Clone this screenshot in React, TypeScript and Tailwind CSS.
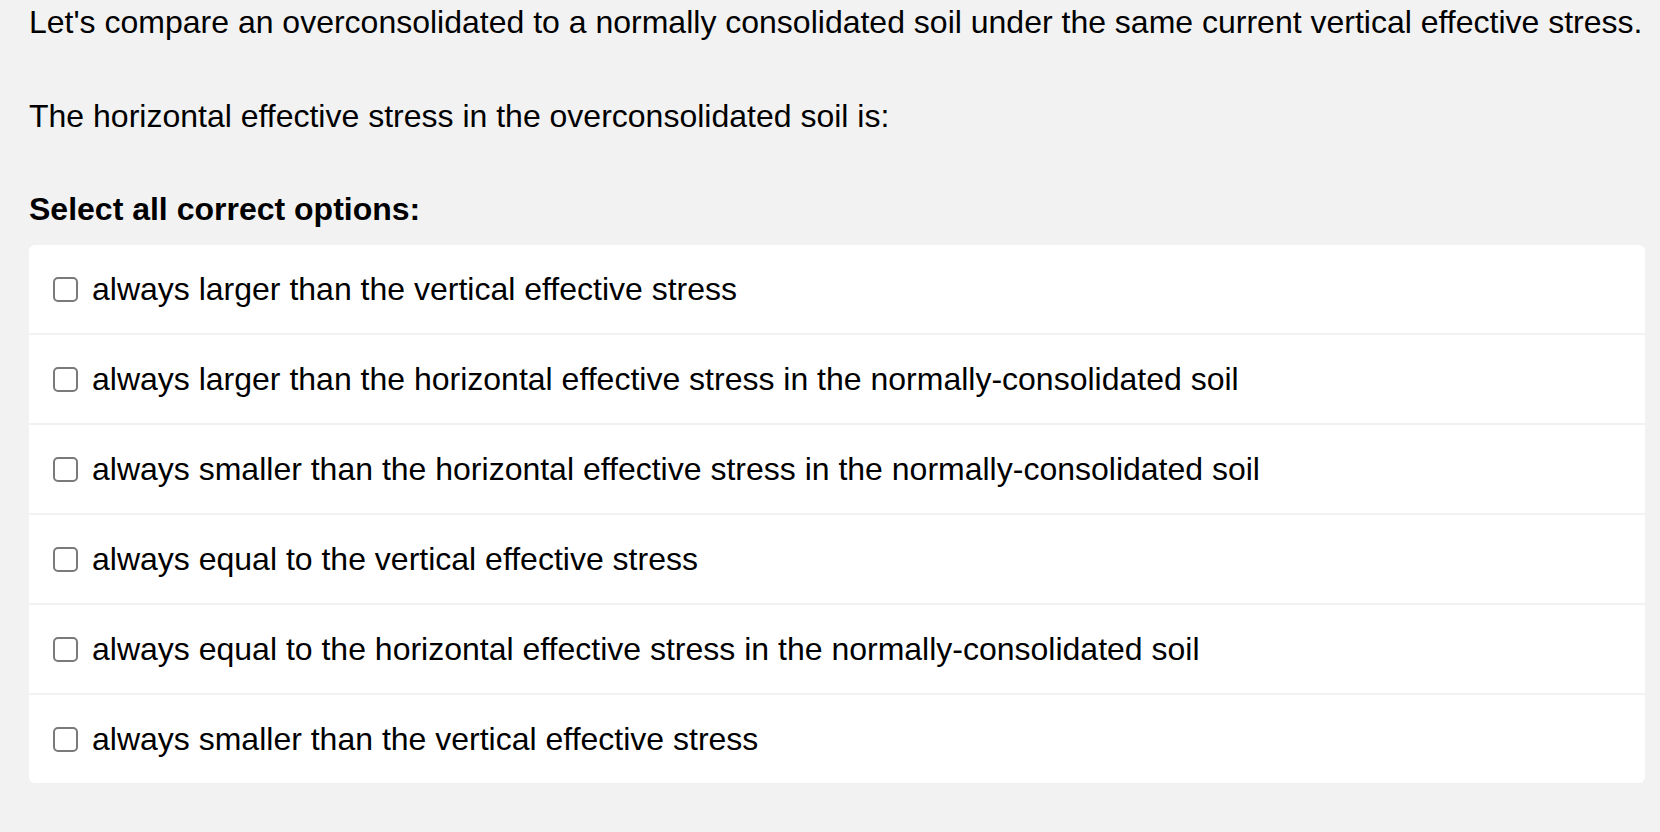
const options = [
  "always larger than the vertical effective stress",
  "always larger than the horizontal effective stress in the normally-consolidated soil",
  "always smaller than the horizontal effective stress in the normally-consolidated soil",
  "always equal to the vertical effective stress",
  "always equal to the horizontal effective stress in the normally-consolidated soil",
  "always smaller than the vertical effective stress",
];

export default function App() {
  return (
    <main className="min-h-screen bg-[#f2f2f2] pl-[29px] pr-[15px] pt-[4px] text-black font-['Liberation_Sans',Arial,sans-serif] text-[32px] leading-[36px]">
      <p className="whitespace-nowrap">
        Let's compare an overconsolidated to a normally consolidated soil under the same current vertical effective stress.
      </p>
      <p className="mt-[58px]">The horizontal effective stress in the overconsolidated soil is:</p>
      <p className="mt-[57px] font-bold">Select all correct options:</p>

      {/* Options */}
      <div className="mt-[18px] bg-white rounded-[6px] flex flex-col">
        {options.map((opt, i) => (
          <label
            key={i}
            className={`box-content flex items-center h-[88px] pl-[24px] gap-[14px] ${
              i > 0 ? "border-t-2 border-[#f2f2f2]" : ""
            }`}
          >
            <span className="w-[25px] h-[25px] shrink-0 rounded-[5px] border-2 border-[#7a7a7a] bg-white" />
            <span>{opt}</span>
          </label>
        ))}
      </div>
    </main>
  );
}
